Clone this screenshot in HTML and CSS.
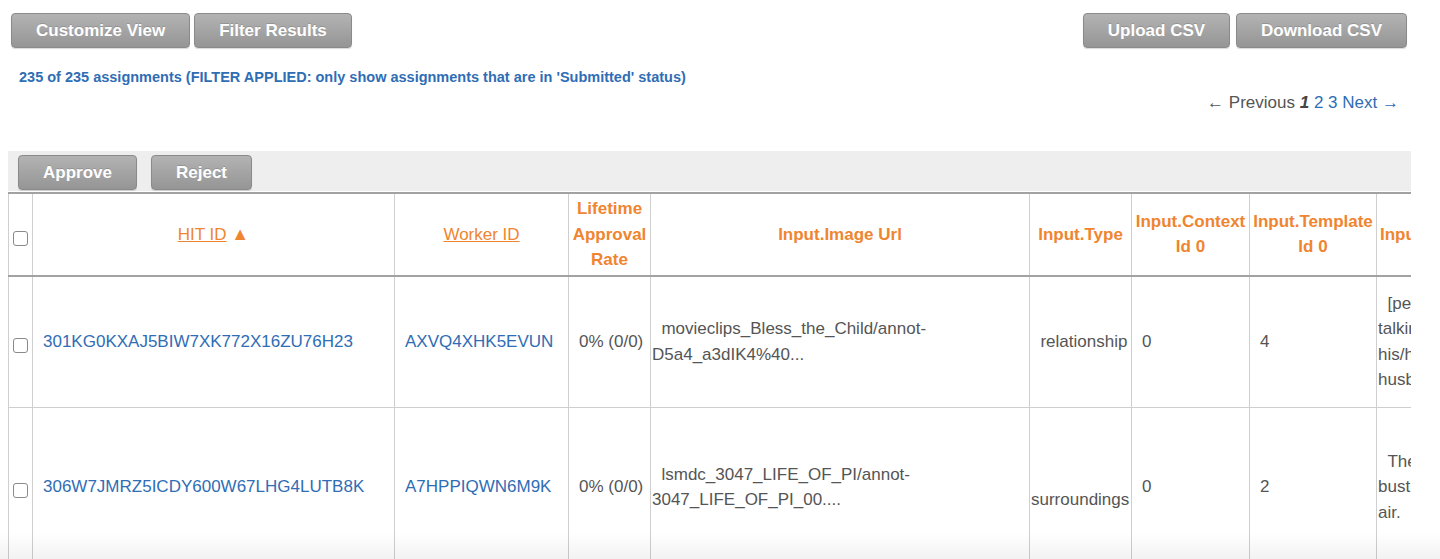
FILE: index.html
```html
<!DOCTYPE html>
<html>
<head>
<meta charset="utf-8">
<link rel="stylesheet" href="styles.css">
</head>
<body>
<div class="toolbar">
  <div class="btn-group">
    <button class="btn">Customize View</button>
    <button class="btn">Filter Results</button>
  </div>
  <div class="btn-group right">
    <button class="btn">Upload CSV</button>
    <button class="btn">Download CSV</button>
  </div>
</div>
<div class="status">235 of 235 assignments (FILTER APPLIED: only show assignments that are in 'Submitted' status)</div>
<div class="pager"><span class="muted">← Previous</span> <b class="current">1</b> <a href="#">2</a> <a href="#">3</a> <a href="#">Next →</a></div>

<div class="grid-wrap">
  <div class="actionbar">
    <button class="btn small">Approve</button>
    <button class="btn small">Reject</button>
  </div>
  <table class="grid">
    <colgroup>
      <col class="c-check"><col class="c-hit"><col class="c-worker"><col class="c-rate"><col class="c-url"><col class="c-type"><col class="c-ctx"><col class="c-tpl"><col class="c-text"><col class="c-extra">
    </colgroup>
    <thead>
      <tr>
        <th class="chk"><input type="checkbox" class="cb"></th>
        <th><a href="#" class="sort">HIT ID</a> <span class="arrow">▲</span></th>
        <th><a href="#" class="sort">Worker ID</a></th>
        <th class="bold">Lifetime Approval Rate</th>
        <th class="bold">Input.Image Url</th>
        <th class="bold">Input.Type</th>
        <th class="bold">Input.Context Id 0</th>
        <th class="bold">Input.Template Id 0</th>
        <th class="bold left">Input.Text</th>
        <th class="bold">Answer</th>
      </tr>
    </thead>
    <tbody>
      <tr class="r1">
        <td class="chk"><input type="checkbox" class="cb"></td>
        <td class="pad"><a href="#">301KG0KXAJ5BIW7XK772X16ZU76H23</a></td>
        <td class="pad"><a href="#">AXVQ4XHK5EVUN</a></td>
        <td class="pad">0% (0/0)</td>
        <td class="pre">  movieclips_Bless_the_Child/annot-D5a4_a3dIK4%40...</td>
        <td class="pre">  relationship</td>
        <td class="pad">0</td>
        <td class="pad">4</td>
        <td class="pre">  [person] is talking to his/her husband.</td>
        <td class="pad">yes</td>
      </tr>
      <tr class="r2">
        <td class="chk"><input type="checkbox" class="cb"></td>
        <td class="pad"><a href="#">306W7JMRZ5ICDY600W67LHG4LUTB8K</a></td>
        <td class="pad"><a href="#">A7HPPIQWN6M9K</a></td>
        <td class="pad">0% (0/0)</td>
        <td class="pre">  lsmdc_3047_LIFE_OF_PI/annot-3047_LIFE_OF_PI_00....</td>
        <td class="pre">  surroundings</td>
        <td class="pad">0</td>
        <td class="pad">2</td>
        <td class="pre">  The bustling city air.</td>
        <td class="pad">yes</td>
      </tr>
    </tbody>
  </table>
</div>
<div class="fade"></div>
</body>
</html>
```
FILE: styles.css
```css
html, body {
  background: #fff;
}
body {
  margin: 8px;
  font-family: "Liberation Sans", Arial, sans-serif;
  color: #555;
}
a {
  color: #2f6db5;
  text-decoration: none;
}
.toolbar {
  display: flex;
  justify-content: space-between;
  width: 1396px;
  padding: 5px 0 0 3px;
}
.btn-group {
  display: flex;
  gap: 4px;
}
.btn-group.right {
  gap: 6px;
}
.btn {
  font-family: "Liberation Sans", Arial, sans-serif;
  font-weight: bold;
  font-size: 17px;
  color: #fff;
  height: 35px;
  padding: 0 24px;
  border: 1px solid #8a8a8a;
  border-radius: 4px;
  background: linear-gradient(#b3b3b3, #959595);
  text-shadow: 0 -1px 0 rgba(0, 0, 0, 0.15);
  box-shadow: 0 1px 1px rgba(0, 0, 0, 0.15);
  cursor: pointer;
}
.status {
  margin-top: 22px;
  padding-left: 11px;
  font-size: 14.5px;
  font-weight: bold;
  color: #2f6db5;
  line-height: 15px;
}
.pager {
  width: 1391px;
  text-align: right;
  margin-top: 9px;
  font-size: 17px;
  line-height: 18px;
}
.pager .muted {
  color: #555;
}
.pager .current {
  color: #444;
  font-style: italic;
}
.grid-wrap {
  margin-top: 39px;
  width: 1403px;
  overflow: hidden;
}
.actionbar {
  background: #eeeeee;
  display: flex;
  gap: 14px;
  padding: 4px 10px 1px 10px;
  border-bottom: 1px solid #fff;
}
.btn.small {
  height: 35px;
  padding: 0 24px;
}
.grid {
  border-collapse: collapse;
  table-layout: fixed;
  width: 1600px;
  font-size: 17px;
  line-height: 25.5px;
}
.c-check { width: 24px; }
.c-hit { width: 362px; }
.c-worker { width: 174px; }
.c-rate { width: 82px; }
.c-url { width: 379px; }
.c-type { width: 102px; }
.c-ctx { width: 118px; }
.c-tpl { width: 127px; }
.c-text { width: 104px; }
.c-extra { width: 128px; }
.grid th, .grid td {
  border: 1px solid #cfcfcf;
  vertical-align: middle;
}
.grid thead tr {
  border-top: 2px solid #a2a2a2;
  border-bottom: 2px solid #a2a2a2;
}
.grid th {
  color: #ef8530;
  font-weight: normal;
  text-align: center;
  padding: 2px 1px;
}
.grid th.bold {
  font-weight: bold;
}
.grid th.left {
  text-align: left;
  padding-left: 3px;
}
.grid th a.sort {
  color: #ef8530;
  text-decoration: underline;
}
.grid th .arrow {
  font-size: 18px;
}
.grid td {
  padding: 14px 1px;
  text-align: left;
}
.grid td.pad {
  padding-left: 10px;
  padding-right: 6px;
}
.grid td.pre {
  white-space: pre-wrap;
  padding-left: 1px;
  padding-right: 1px;
}
.grid .chk {
  padding: 0;
  text-align: center;
}
.grid .r2 {
  height: 160px;
}
.cb {
  appearance: none;
  -webkit-appearance: none;
  width: 15px;
  height: 15px;
  margin: 6px 0 0 0;
  border: 1px solid #8a8a8a;
  border-radius: 3px;
  background: #fff;
  vertical-align: middle;
}
.fade {
  position: fixed;
  left: 0;
  right: 0;
  bottom: 0;
  height: 26px;
  background: linear-gradient(rgba(0, 0, 0, 0), rgba(0, 0, 0, 0.05));
  pointer-events: none;
}
```
